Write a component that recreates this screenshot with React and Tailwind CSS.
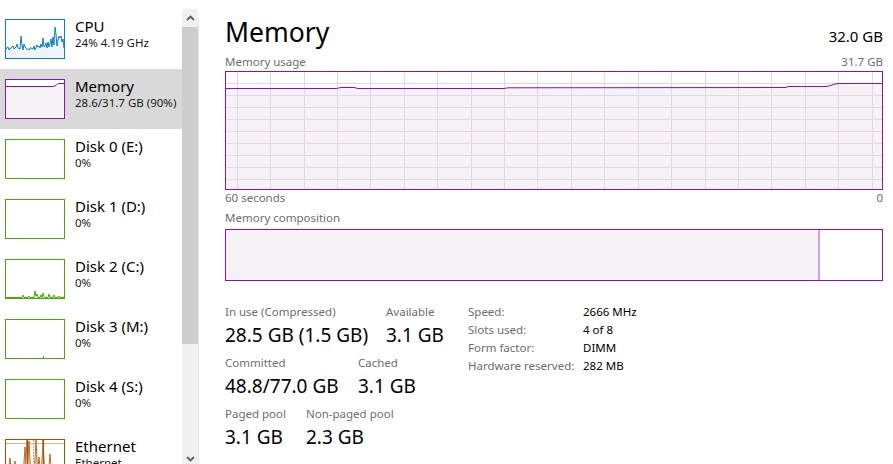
import React from "react";

const cpuPts = [
  [0, 29], [2, 27], [3, 30], [5, 28], [7, 26], [8, 29], [10, 27], [11, 24], [12, 28], [14, 29],
  [15, 16], [16, 25], [17, 30], [18, 24], [19, 27], [21, 29], [23, 30], [24, 28], [25, 28], [27, 29],
  [28, 26], [29, 30], [31, 25], [32, 27], [33, 26], [34, 28], [35, 24], [36, 27], [37, 18], [38, 27],
  [39, 26], [40, 23], [41, 28], [42, 22], [43, 27], [44, 24], [45, 19], [46, 27], [47, 17], [48, 25],
  [49, 7], [50, 14], [51, 26], [52, 20], [53, 16], [54, 18], [55, 16], [56, 22], [57, 19], [58, 28],
];

function CpuGraph() {
  const line = cpuPts.map((p) => p.join(",")).join(" ");
  const area = `0,38 ${line} 58,38`;
  return (
    <svg width="58" height="38" className="block">
      <polygon points={area} fill="#eef4fa" />
      <polyline points={line} fill="none" stroke="#117dbb" strokeWidth="1" />
    </svg>
  );
}

function MemThumb() {
  const line = "0,6.5 47,6.5 50,5.5 52,3.5 58,3.5";
  return (
    <svg width="58" height="38" className="block">
      <polygon points={`0,38 ${line} 58,38`} fill="#f4f2f4" />
      <polyline points={line} fill="none" stroke="#8b12ae" strokeWidth="1" />
    </svg>
  );
}

function Disk2Thumb() {
  const line =
    "0,37.5 16,37.5 17,35 18,37.5 22,37.5 23,36 24,37.5 28,37.5 29,31 30,36 31,34 32,37.5 34,37.5 35,35 36,37.5 37,33 38,36 39,37.5 42,37.5 43,34 44,37.5 47,37.5 48,35 49,37.5 52,37.5 53,36 54,37.5 58,37.5";
  return (
    <svg width="58" height="38" className="block">
      <polygon points={`0,38 ${line} 58,38`} fill="#dcefcf" />
      <polyline points={line} fill="none" stroke="#4da60c" strokeWidth="1" />
    </svg>
  );
}

function Disk3Thumb() {
  return (
    <svg width="58" height="38" className="block">
      <line x1="37.5" y1="36" x2="37.5" y2="38" stroke="#4da60c" strokeWidth="1" />
    </svg>
  );
}

function EthThumb() {
  const spikes = [
    [4, 18, 2], [9, 21, 2], [19, 7, 2], [21, 0, 2], [23, 1, 2], [30, 0, 2], [33, 17, 2], [37, 0, 2], [44, 14, 2],
  ];
  return (
    <svg width="58" height="38" className="block">
      <line x1="0" y1="3.5" x2="58" y2="3.5" stroke="#e2b58c" strokeWidth="1" />
      {spikes.map(([x, top, w], i) => (
        <polygon key={i} points={`${x - w},38 ${x},${top} ${x + w},38`} fill="#f3d9c2" stroke="#a74f01" strokeWidth="0.8" />
      ))}
      <line x1="21.5" y1="0" x2="21.5" y2="38" stroke="#a74f01" strokeWidth="1" />
      <line x1="37.5" y1="0" x2="37.5" y2="38" stroke="#a74f01" strokeWidth="1" />
      <line x1="27.5" y1="0" x2="27.5" y2="38" stroke="#e8804a" strokeWidth="1" strokeDasharray="1.5 1.5" />
    </svg>
  );
}

const items = [
  { name: "CPU", sub: "24% 4.19 GHz", border: "border-[#117dbb]", g: <CpuGraph /> },
  { name: "Memory", sub: "28.6/31.7 GB (90%)", border: "border-[#8b12ae]", g: <MemThumb />, sel: true },
  { name: "Disk 0 (E:)", sub: "0%", border: "border-[#4da60c]", g: null },
  { name: "Disk 1 (D:)", sub: "0%", border: "border-[#4da60c]", g: null },
  { name: "Disk 2 (C:)", sub: "0%", border: "border-[#4da60c]", g: <Disk2Thumb /> },
  { name: "Disk 3 (M:)", sub: "0%", border: "border-[#4da60c]", g: <Disk3Thumb /> },
  { name: "Disk 4 (S:)", sub: "0%", border: "border-[#4da60c]", g: null },
  { name: "Ethernet", sub: "Ethernet", border: "border-[#a74f01]", g: <EthThumb /> },
];

function SideItem({ it }) {
  return (
    <div className={`h-[60px] shrink-0 flex pl-[5px] ${it.sel ? "bg-[#d9d9d9]" : ""}`}>
      <div className={`mt-[10px] w-[60px] h-[40px] border bg-white shrink-0 ${it.border}`}>{it.g}</div>
      <div className="ml-[10px] pt-[7.7px] flex flex-col">
        <div className="text-[15px] leading-[19px] text-black whitespace-nowrap">{it.name}</div>
        <div className="text-[11.5px] leading-[14px] text-[#1a1a1a] whitespace-nowrap">{it.sub}</div>
      </div>
    </div>
  );
}

function UsageGraph() {
  const vx = Array.from({ length: 20 }, (_, k) => Math.round(10.7 + 33.42 * k) + 0.5);
  const hy = Array.from({ length: 9 }, (_, k) => Math.round(10.7 + 12 * k) + 0.5);
  const line =
    "0,16.5 110,16.5 115,15.5 128,15.5 132,16.5 278,16.5 282,15.8 559,15.5 563,14.5 601,14.5 611,11.5 656,11.5";
  return (
    <svg width="656" height="117" className="block">
      <polygon points={`0,117 ${line} 656,117`} fill="#f4f2f4" />
      {vx.map((x) => (
        <line key={"v" + x} x1={x} y1="0" x2={x} y2="117" stroke="#e6d4ec" strokeWidth="1" />
      ))}
      {hy.map((y) => (
        <line key={"h" + y} x1="0" y1={y} x2="656" y2={y} stroke="#e6d4ec" strokeWidth="1" />
      ))}
      <polyline points={line} fill="none" stroke="#8b12ae" strokeWidth="1" />
    </svg>
  );
}

function Stat({ label, value, w }) {
  return (
    <div className={`flex flex-col shrink-0 ${w}`}>
      <div className="text-[11.5px] leading-[18px] text-[#6d6d6d] whitespace-nowrap">{label}</div>
      <div className="text-[19px] leading-[28px] text-black whitespace-nowrap">{value}</div>
    </div>
  );
}

export default function App() {
  return (
    <div className="w-[893px] h-[464px] overflow-hidden bg-white flex font-['Noto_Sans',sans-serif]">
      {/* Sidebar */}
      <div className="w-[199px] shrink-0 flex h-[464px]">
        <div className="w-[182px] shrink-0 pt-[9px] flex flex-col">
          {items.map((it) => (
            <SideItem key={it.name} it={it} />
          ))}
        </div>
        <div className="w-[16px] shrink-0 mt-[9px] h-[459px] bg-[#f0f0f0] flex flex-col">
          <div className="h-[18px] flex items-center justify-center">
            <svg width="9" height="6" viewBox="0 0 9 6">
              <path d="M1 5 L4.5 1.5 L8 5" fill="none" stroke="#606060" strokeWidth="1.8" />
            </svg>
          </div>
          <div className="h-[317px] bg-[#cdcdcd]" />
          <div className="flex-1" />
          <div className="h-[18px] flex items-center justify-center">
            <svg width="9" height="6" viewBox="0 0 9 6">
              <path d="M1 1 L4.5 4.5 L8 1" fill="none" stroke="#606060" strokeWidth="1.8" />
            </svg>
          </div>
        </div>
        <div className="w-[1px] shrink-0 mt-[19px] bg-[#e6e6e6]" />
      </div>

      {/* Main */}
      <div className="flex-1 pl-[26px] pr-[10px] flex flex-col">
        <div className="h-[52px] pt-[16px] flex items-baseline justify-between">
          <div className="text-[26.5px] leading-[32px] text-black">Memory</div>
          <div className="text-[15px] leading-[20px] text-black">32.0 GB</div>
        </div>
        <div className="h-[19px] flex justify-between text-[11.5px] leading-[19px] text-[#6d6d6d]">
          <span>Memory usage</span>
          <span>31.7 GB</span>
        </div>
        <div className="h-[119px] border border-[#8b12ae] bg-white">
          <UsageGraph />
        </div>
        <div className="h-[16px] flex justify-between text-[11.5px] leading-[16px] text-[#6d6d6d]">
          <span>60 seconds</span>
          <span>0</span>
        </div>
        <div className="h-[23px] text-[11.5px] leading-[23px] text-[#6d6d6d]">Memory composition</div>
        <div className="h-[52px] border border-[#8b12ae] bg-white flex">
          <div className="w-[592px] bg-[#f4f2f4]" />
          <div className="w-[2px] bg-[#c9a7d8]" />
          <div className="flex-1 bg-white" />
        </div>

        <div className="mt-[22px] flex">
          <div className="w-[243px] shrink-0 flex flex-col gap-[5px]">
            <div className="flex">
              <Stat label="In use (Compressed)" value="28.5 GB (1.5 GB)" w="w-[161px]" />
              <Stat label="Available" value="3.1 GB" w="" />
            </div>
            <div className="flex">
              <Stat label="Committed" value="48.8/77.0 GB" w="w-[133px]" />
              <Stat label="Cached" value="3.1 GB" w="" />
            </div>
            <div className="flex">
              <Stat label="Paged pool" value="3.1 GB" w="w-[81px]" />
              <Stat label="Non-paged pool" value="2.3 GB" w="" />
            </div>
          </div>
          <div className="grid grid-cols-[115px_auto] text-[11.5px] leading-[18px] content-start">
            <span className="text-[#6d6d6d]">Speed:</span>
            <span className="text-black">2666 MHz</span>
            <span className="text-[#6d6d6d]">Slots used:</span>
            <span className="text-black">4 of 8</span>
            <span className="text-[#6d6d6d]">Form factor:</span>
            <span className="text-black">DIMM</span>
            <span className="text-[#6d6d6d]">Hardware reserved:</span>
            <span className="text-black">282 MB</span>
          </div>
        </div>
      </div>
    </div>
  );
}
